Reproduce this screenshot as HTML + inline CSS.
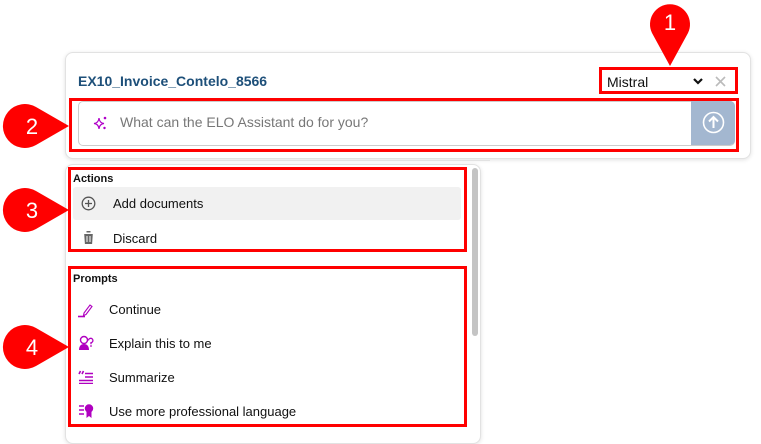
<!DOCTYPE html>
<html><head><meta charset="utf-8"><style>
*{margin:0;padding:0;box-sizing:border-box}
body{width:761px;height:437px;background:#fff;position:relative;overflow:hidden;font-family:"Liberation Sans",sans-serif;color:#111}
.abs{position:absolute}
.panel{border:1px solid #e2e2e2;border-radius:8px;background:#fff;box-shadow:0 1px 4px rgba(0,0,0,.12)}
.rb{position:absolute;border:3px solid #f00}
.t{position:absolute;font-size:13px}
.pin{position:absolute;width:40px;height:40px;background:#f00;color:#fff;font-size:22px;text-align:center;line-height:40px}
</style></head><body>
<div class="abs" style="left:90px;top:160px;width:400px;height:1px;background:#eee"></div>
<div class="abs panel" style="left:65px;top:52px;width:686px;height:107px"></div>
<div class="t" style="left:78px;top:73px;font-size:14px;font-weight:bold;color:#1d4f79">EX10_Invoice_Contelo_8566</div>
<div class="t" style="left:607px;top:74px;font-size:14px">Mistral</div>
<svg class="abs" style="left:692px;top:77px" width="12" height="9"><path d="M2 2l4 4 4-4" stroke="#111" stroke-width="2.2" fill="none"/></svg>
<svg class="abs" style="left:715px;top:76px" width="11" height="11"><path d="M1 1l9 9M10 1l-9 9" stroke="#bbb" stroke-width="1.6"/></svg>
<div class="rb" style="left:599px;top:67px;width:139px;height:27px"></div>
<div class="abs" style="left:78px;top:101px;width:657px;height:45px;border:1px solid #ccc;border-radius:5px;background:#fff"></div>
<div class="abs" style="left:691px;top:101px;width:44px;height:44px;background:#a3b7d0;border-radius:0 5px 5px 0"></div>
<svg class="abs" style="left:702px;top:111px" width="23" height="23"><circle cx="11.5" cy="11.5" r="10" stroke="#fff" stroke-width="1.6" fill="none"/><path d="M11.5 17V6M7 10.5l4.5-4.5 4.5 4.5" stroke="#fff" stroke-width="2" fill="none"/></svg>
<svg class="abs" style="left:92px;top:115px" width="16" height="16"><path d="M7 3 Q7.5 8 12 8.5 Q7.5 9 7 14 Q6.5 9 2 8.5 Q6.5 8 7 3Z" fill="none" stroke="#b000c8" stroke-width="1.2"/><circle cx="13" cy="3" r="1.3" fill="#b000c8"/><circle cx="12.5" cy="13" r="1.2" fill="#b000c8"/></svg>
<div class="t" style="left:120px;top:114px;font-size:14px;color:#777">What can the ELO Assistant do for you?</div>
<div class="rb" style="left:69px;top:98px;width:670px;height:54px"></div>

<div class="abs panel" style="left:65px;top:164px;width:416px;height:280px"></div>
<div class="abs" style="left:472px;top:168px;width:6px;height:168px;background:#c4c4c4;border-radius:3px"></div>
<div class="t" style="left:73px;top:173px;font-size:11px;font-weight:bold">Actions</div>
<div class="abs" style="left:73px;top:187px;width:388px;height:33px;background:#f1f1f1;border-radius:3px"></div>
<svg class="abs" style="left:81px;top:196px" width="15" height="15"><circle cx="7.5" cy="7.5" r="6.3" stroke="#555" stroke-width="1.3" fill="none"/><path d="M7.5 4v7M4 7.5h7" stroke="#555" stroke-width="1.3"/></svg>
<div class="t" style="left:113px;top:196px">Add documents</div>
<svg class="abs" style="left:82px;top:230px" width="13" height="15"><path d="M1 2.5h11M4.5 2.5V1h4v1.5M2.2 4h8.6l-.7 10H2.9Z" fill="#666"/><path d="M5 6v6M8 6v6" stroke="#fff" stroke-width="1"/></svg>
<div class="t" style="left:113px;top:231px">Discard</div>
<div class="rb" style="left:68px;top:167px;width:399px;height:85px"></div>

<div class="t" style="left:73px;top:273px;font-size:11px;font-weight:bold">Prompts</div>
<svg class="abs" style="left:77px;top:302px" width="16" height="16"><path d="M1 14.5h7" stroke="#b000c0" stroke-width="1.6"/><path d="M7 11l6-8 2 1.5-6 8-2.5 1z" fill="none" stroke="#b000c0" stroke-width="1.1"/></svg>
<div class="t" style="left:109px;top:302px">Continue</div>
<svg class="abs" style="left:78px;top:335px" width="16" height="16"><circle cx="6" cy="5" r="3.5" fill="none" stroke="#b000c0" stroke-width="1.4"/><path d="M1 15c0-4 2-6 5-6s5 2 5 6z" fill="#b000c0"/><path d="M10.5 5.5a2.2 2.2 0 1 1 2.5 2.2v1.5" fill="none" stroke="#b000c0" stroke-width="1.3"/><circle cx="13" cy="11" r=".9" fill="#b000c0"/></svg>
<div class="t" style="left:109px;top:336px">Explain this to me</div>
<svg class="abs" style="left:78px;top:370px" width="16" height="14"><path d="M1 4l1.5-3M4 4l1.5-3M7 3.5h8M7 7h8M1 10.5h14M1 13.5h14" stroke="#b000c0" stroke-width="1.6" fill="none"/></svg>
<div class="t" style="left:109px;top:370px">Summarize</div>
<svg class="abs" style="left:78px;top:403px" width="16" height="16"><path d="M1 3h5M1 7h5M1 11h5" stroke="#b000c0" stroke-width="1.6"/><circle cx="11" cy="5.5" r="4.2" fill="#b000c0"/><path d="M8.5 9v6l2.5-2 2.5 2V9" fill="#b000c0"/></svg>
<div class="t" style="left:109px;top:404px">Use more professional language</div>
<div class="rb" style="left:68px;top:266px;width:399px;height:161px"></div>

<svg class="abs" style="left:0;top:0" width="761" height="437">
<path d="M670 66 L652 33 A20 20 0 1 1 688 33 Z" fill="#f00"/>
<path d="M69 126 L36 145 A22 22 0 1 1 36 107 Z" fill="#f00"/>
<path d="M69 210 L36 229 A22 22 0 1 1 36 191 Z" fill="#f00"/>
<path d="M69 347 L36 366 A22 22 0 1 1 36 328 Z" fill="#f00"/>
<g fill="#fff" font-family="Liberation Sans, sans-serif" font-size="22" text-anchor="middle">
<text x="670" y="30">1</text><text x="32" y="134">2</text><text x="32" y="218">3</text><text x="32" y="355">4</text>
</g></svg>
</body></html>
